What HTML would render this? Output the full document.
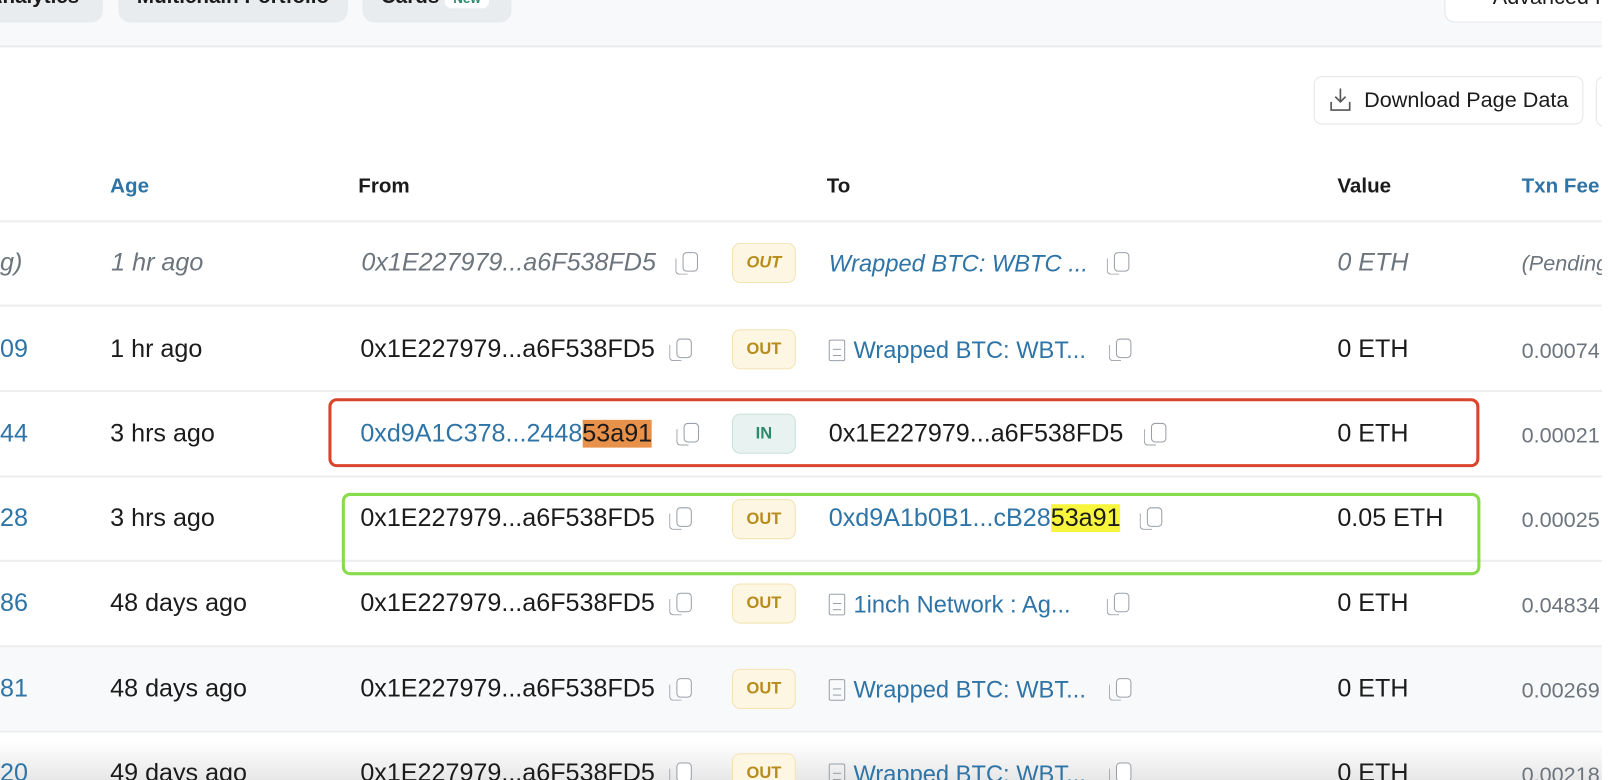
<!DOCTYPE html>
<html><head><meta charset="utf-8"><style>
html,body{margin:0;padding:0;width:1613px;height:780px;overflow:hidden;background:#fff}
#w{position:absolute;left:0;top:0;width:1556px;height:758px;transform:scale(1.0295,1.029);transform-origin:0 0;overflow:hidden;font-family:"Liberation Sans",sans-serif;color:#1b1b1b;background:#fff}
.a{position:absolute;white-space:nowrap}
.top{position:absolute;left:0;top:0;width:1556px;height:44px;background:#f8f9fb;border-bottom:2px solid #e9ecef}
.tab{position:absolute;top:-20px;height:42px;background:#e9ecef;border-radius:12px;font-weight:bold;font-size:20px;line-height:34px;padding:0 18px;box-sizing:border-box;white-space:nowrap;overflow:hidden}
.hdr{font-weight:bold;font-size:20px;top:170px}
.line{position:absolute;left:0;width:1556px;height:2px;background:#eceef0}
.t{font-size:24.4px;line-height:28px}
.n{font-size:23px!important}
.g{color:#6c757d}
.b{color:#2f74a6}
.f{font-size:21px!important}
.badge{position:absolute;left:711px;width:62px;height:39px;border-radius:8px;box-sizing:border-box;font-weight:bold;font-size:16px;text-align:center;line-height:37px}
.out{background:#fdf6e3;border:1px solid #f3e3b3;color:#b78c1a}
.in{background:#e8f3f1;border:1px solid #c9e0da;color:#2c8a6a}
.cp{position:absolute;width:13px;height:17px;border:1.8px solid #9aa0a6;border-radius:4px;background:#fff}
.cp:before{content:"";position:absolute;left:-8px;top:5px;width:11px;height:15px;border:1.8px solid #9aa0a6;border-right:none;border-top:none;border-radius:0 0 0 4px}
.doc{position:absolute;width:14px;height:19px;border:1.6px solid #9aa0a6;border-radius:2px}
.doc:after{content:"";position:absolute;left:3px;top:8px;width:8px;height:5px;border-top:1.5px solid #9aa0a6;border-bottom:1.5px solid #9aa0a6}
</style></head><body><div id="w">
<div class="top"></div>
<div class="tab" style="left:-30px;width:130px">Analytics</div>
<div class="tab" style="left:115px;width:223px">Multichain Portfolio</div>
<div class="tab" style="left:352px;width:145px">Cards <span style="background:#fff;color:#2c8a6a;font-size:13px;padding:2px 8px;border-radius:6px">New</span></div>
<div class="a" style="left:1403px;top:-20px;width:170px;height:42px;background:#fff;border:1px solid #e3e6ea;border-radius:10px;font-size:21px;line-height:34px;padding-left:46px;box-sizing:border-box">Advanced F</div>
<div class="a" style="left:1276px;top:74px;width:262px;height:47px;border:1px solid #e3e6ea;border-radius:8px;box-sizing:border-box;font-size:21px;line-height:45px;padding-left:48px">Download Page Data</div>
<svg class="a" style="left:1290px;top:84px" width="24" height="26" viewBox="0 0 24 26" fill="none" stroke="#555" stroke-width="1.6"><path d="M12 2v13M7 10l5 5 5-5M3 15v8h18v-8"/></svg>
<div class="a" style="left:1550px;top:74px;width:20px;height:47px;border:1px solid #e3e6ea;border-radius:8px"></div>
<div class="a hdr b" style="left:107px">Age</div>
<div class="a hdr" style="left:348px">From</div>
<div class="a hdr" style="left:803px">To</div>
<div class="a hdr" style="left:1299px">Value</div>
<div class="a hdr b" style="left:1478px">Txn Fee</div>
<div class="line" style="top:214px"></div>
<div class="a" style="left:0;top:628px;width:1556px;height:82px;background:#f8f9fa"></div>
<div class="line" style="top:296px"></div><div class="line" style="top:379px"></div><div class="line" style="top:462px"></div><div class="line" style="top:544px"></div><div class="line" style="top:627px"></div><div class="line" style="top:710px"></div>
<div class="a" style="left:0;top:720px;width:1556px;height:40px;background:linear-gradient(#fff0,#e6e6e6)"></div>

<div class="a t g" style="left:0;top:242px;font-style:italic">g)</div>
<div class="a t g" style="left:108px;top:242px;font-style:italic">1 hr ago</div>
<div class="a t g" style="left:351px;top:242px;font-style:italic">0x1E227979...a6F538FD5</div>
<div class="cp" style="left:663px;top:245px"></div>
<div class="badge out" style="top:236px;font-style:italic">OUT</div>
<div class="a t b n" style="left:805px;top:242px;font-style:italic">Wrapped BTC: WBTC ...</div>
<div class="cp" style="left:1082px;top:245px"></div>
<div class="a t g" style="left:1299px;top:242px;font-style:italic">0 ETH</div>
<div class="a t g f" style="left:1478px;top:243px;font-style:italic">(Pending)</div>

<div class="a t b" style="left:0;top:326px">09</div>
<div class="a t" style="left:107px;top:326px">1 hr ago</div>
<div class="a t" style="left:350px;top:326px">0x1E227979...a6F538FD5</div>
<div class="cp" style="left:657px;top:329px"></div>
<div class="badge out" style="top:320px">OUT</div>
<div class="doc" style="left:805px;top:330px"></div>
<div class="a t b n" style="left:829px;top:326px">Wrapped BTC: WBT...</div>
<div class="cp" style="left:1084px;top:329px"></div>
<div class="a t" style="left:1299px;top:326px">0 ETH</div>
<div class="a t g f" style="left:1478px;top:328px">0.00074</div>

<div class="a t b" style="left:0;top:408px">44</div>
<div class="a t" style="left:107px;top:408px">3 hrs ago</div>
<div class="a t b" style="left:350px;top:408px">0xd9A1C378...2448<span style="background:#e8914a;color:#1b1b1b">53a91</span></div>
<div class="cp" style="left:664px;top:411px"></div>
<div class="badge in" style="top:402px">IN</div>
<div class="a t" style="left:805px;top:408px">0x1E227979...a6F538FD5</div>
<div class="cp" style="left:1118px;top:411px"></div>
<div class="a t" style="left:1299px;top:408px">0 ETH</div>
<div class="a t g f" style="left:1478px;top:410px">0.00021</div>

<div class="a t b" style="left:0;top:490px">28</div>
<div class="a t" style="left:107px;top:490px">3 hrs ago</div>
<div class="a t" style="left:350px;top:490px">0x1E227979...a6F538FD5</div>
<div class="cp" style="left:657px;top:493px"></div>
<div class="badge out" style="top:485px">OUT</div>
<div class="a t b" style="left:805px;top:490px">0xd9A1b0B1...cB28<span style="background:#f7f53c;color:#1b1b1b">53a91</span></div>
<div class="cp" style="left:1114px;top:493px"></div>
<div class="a t" style="left:1299px;top:490px">0.05 ETH</div>
<div class="a t g f" style="left:1478px;top:492px">0.00025</div>

<div class="a t b" style="left:0;top:573px">86</div>
<div class="a t" style="left:107px;top:573px">48 days ago</div>
<div class="a t" style="left:350px;top:573px">0x1E227979...a6F538FD5</div>
<div class="cp" style="left:657px;top:576px"></div>
<div class="badge out" style="top:567px">OUT</div>
<div class="doc" style="left:805px;top:577px"></div>
<div class="a t b n" style="left:829px;top:573px">1inch Network : Ag...</div>
<div class="cp" style="left:1082px;top:576px"></div>
<div class="a t" style="left:1299px;top:573px">0 ETH</div>
<div class="a t g f" style="left:1478px;top:575px">0.04834</div>

<div class="a t b" style="left:0;top:656px">81</div>
<div class="a t" style="left:107px;top:656px">48 days ago</div>
<div class="a t" style="left:350px;top:656px">0x1E227979...a6F538FD5</div>
<div class="cp" style="left:657px;top:659px"></div>
<div class="badge out" style="top:650px">OUT</div>
<div class="doc" style="left:805px;top:660px"></div>
<div class="a t b n" style="left:829px;top:656px">Wrapped BTC: WBT...</div>
<div class="cp" style="left:1084px;top:659px"></div>
<div class="a t" style="left:1299px;top:656px">0 ETH</div>
<div class="a t g f" style="left:1478px;top:658px">0.00269</div>

<div class="a t b" style="left:0;top:738px">20</div>
<div class="a t" style="left:107px;top:738px">49 days ago</div>
<div class="a t" style="left:350px;top:738px">0x1E227979...a6F538FD5</div>
<div class="cp" style="left:657px;top:741px"></div>
<div class="badge out" style="top:732px">OUT</div>
<div class="doc" style="left:805px;top:742px"></div>
<div class="a t b n" style="left:829px;top:738px">Wrapped BTC: WBT...</div>
<div class="cp" style="left:1084px;top:741px"></div>
<div class="a t" style="left:1299px;top:738px">0 ETH</div>
<div class="a t g f" style="left:1478px;top:740px">0.00218</div>

<div class="a" style="left:319px;top:387px;width:1118px;height:67px;border:3px solid #d9452b;border-radius:8px;box-sizing:border-box"></div>
<div class="a" style="left:332px;top:479px;width:1106px;height:80px;border:3px solid #86dc4a;border-radius:8px;box-sizing:border-box"></div>
</div></body></html>
